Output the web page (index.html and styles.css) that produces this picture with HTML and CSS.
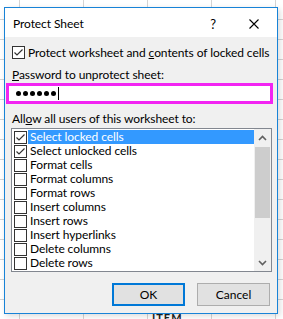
FILE: index.html
```html
<!DOCTYPE html>
<html lang="en">
  <head>
    <meta charset="UTF-8" />
    <title>Protect Sheet</title>
    <link rel="stylesheet" href="styles.css">
  </head>
  <body>
    <div class="dialog">
      <div class="titlebar">
        <span class="title">Protect Sheet</span>
        <span class="help">?</span>
        <span class="close">
          <svg width="10" height="10" viewBox="0 0 10 10">
            <path d="M0.5 0.5 L9.5 9.5 M9.5 0.5 L0.5 9.5" stroke="#000" stroke-width="1.1" fill="none" />
          </svg>
        </span>
      </div>

      <div class="content">
        <div class="check-row">
          <span class="cb checked"></span>
          <span>Protect worksheet and <u>c</u>ontents of locked cells</span>
        </div>

        <div class="label"><u>P</u>assword to unprotect sheet:</div>
        <div class="password">
          <span class="dot"></span><span class="dot"></span><span class="dot"></span>
          <span class="dot"></span><span class="dot"></span><span class="dot"></span>
          <span class="caret"></span>
        </div>

        <div class="label allow">All<u>o</u>w all users of this worksheet to:</div>
        <div class="listbox">
          <ul class="items">
            <li class="selected"><span class="cb checked"></span><span class="text">Select locked cells</span></li>
            <li><span class="cb checked"></span><span class="text">Select unlocked cells</span></li>
            <li><span class="cb"></span><span class="text">Format cells</span></li>
            <li><span class="cb"></span><span class="text">Format columns</span></li>
            <li><span class="cb"></span><span class="text">Format rows</span></li>
            <li><span class="cb"></span><span class="text">Insert columns</span></li>
            <li><span class="cb"></span><span class="text">Insert rows</span></li>
            <li><span class="cb"></span><span class="text">Insert hyperlinks</span></li>
            <li><span class="cb"></span><span class="text">Delete columns</span></li>
            <li><span class="cb"></span><span class="text">Delete rows</span></li>
          </ul>
          <div class="scrollbar">
            <span class="arrow">
              <svg width="9" height="6" viewBox="0 0 9 6"><path d="M1 5 L4.5 1.5 L8 5" stroke="#606060" stroke-width="1.6" fill="none" /></svg>
            </span>
            <span class="track"><span class="thumb"></span></span>
            <span class="arrow">
              <svg width="9" height="6" viewBox="0 0 9 6"><path d="M1 1 L4.5 4.5 L8 1" stroke="#606060" stroke-width="1.6" fill="none" /></svg>
            </span>
          </div>
        </div>

        <div class="buttons">
          <button class="btn primary">OK</button>
          <button class="btn">Cancel</button>
        </div>
      </div>
    </div>
    <div class="sheet-text">ITEM</div>
  </body>
</html>
```

FILE: styles.css
```css
* {
  margin: 0;
  padding: 0;
  box-sizing: border-box;
}

body {
  font-family: Lato, "Noto Sans", sans-serif;
  font-size: 12px;
  letter-spacing: -0.08px;
  color: #000;
  background-color: #fff;
  background-image: linear-gradient(to right, #d4d4d4 1px, transparent 1px),
    linear-gradient(to bottom, #d4d4d4 1px, transparent 1px);
  background-size: 64px 20px;
  background-position: 19px 19px;
  width: 283px;
  height: 319px;
  overflow: hidden;
  padding: 7px 0 0 4px;
}

.dialog {
  position: relative;
  z-index: 1;
  width: 274px;
  height: 307px;
  border: 1px solid #1883d7;
  background: #f0f0f0;
  box-shadow: 2px 2px 6px rgba(0, 0, 0, 0.15);
}

.titlebar {
  height: 29px;
  background: #fff;
  display: flex;
  align-items: center;
  padding: 2px 0 0 8px;
}

.title {
  font-size: 12px;
  flex: 1;
}

.help {
  font-size: 13px;
  width: 20px;
  text-align: center;
  margin-right: 26px;
}

.close {
  display: flex;
  margin-right: 18px;
}

.content {
  padding-top: 8px;
}

.check-row {
  display: flex;
  align-items: center;
  height: 15px;
  margin-left: 7px;
  gap: 3px;
  white-space: nowrap;
}

.cb {
  display: inline-block;
  width: 13px;
  height: 13px;
  border: 1px solid #333;
  background: #fff;
  flex-shrink: 0;
}

.cb.checked {
  background: #fff url("data:image/svg+xml;utf8,<svg xmlns='http://www.w3.org/2000/svg' width='11' height='11'><path d='M1.5 5.5 L4 8 L9.5 2.5' stroke='%23333' stroke-width='1.2' fill='none'/></svg>") no-repeat center;
}

.label {
  height: 16px;
  line-height: 16px;
  margin: 7px 0 0 7px;
}

.password {
  display: flex;
  align-items: center;
  gap: 2px;
  width: 267px;
  height: 21px;
  margin: 0 0 0 1px;
  border: 3px solid #f224f2;
  background: #fff;
  padding-left: 7px;
}

.dot {
  width: 5px;
  height: 5px;
  border-radius: 50%;
  background: #000;
}

.caret {
  width: 1px;
  height: 13px;
  background: #000;
}

.label.allow {
  margin-top: 7px;
}

.listbox {
  display: flex;
  width: 261px;
  height: 144px;
  margin: 1px 0 0 6px;
  border: 1px solid #828790;
  background: #fff;
}

.items {
  list-style: none;
  flex: 1;
  padding: 1px 0 0 2px;
}

.items li {
  display: flex;
  align-items: center;
  height: 14px;
  gap: 1px;
}

.items .text {
  height: 14px;
  line-height: 14px;
  padding-left: 2px;
  flex: 1;
}

.items li.selected .text {
  background: #3399ff;
  color: #fff;
}

.scrollbar {
  width: 17px;
  display: flex;
  flex-direction: column;
  background: #f0f0f0;
}

.arrow {
  height: 17px;
  display: flex;
  align-items: center;
  justify-content: center;
}

.track {
  flex: 1;
  padding: 1px 1px 0;
}

.thumb {
  display: block;
  height: 71px;
  background: #cdcdcd;
}

.buttons {
  display: flex;
  justify-content: flex-end;
  gap: 12px;
  margin: 11px 7px 0 0;
}

.btn {
  width: 73px;
  height: 23px;
  font-family: inherit;
  font-size: 12px;
  background: #e1e1e1;
  border: 1px solid #adadad;
  color: #000;
}

.btn.primary {
  border: 2px solid #0078d7;
}

.sheet-text {
  margin: -3px 0 0 148px;
  height: 9px;
  overflow: hidden;
  font-size: 11px;
  font-weight: bold;
  letter-spacing: 1px;
  color: #222;
}
```
